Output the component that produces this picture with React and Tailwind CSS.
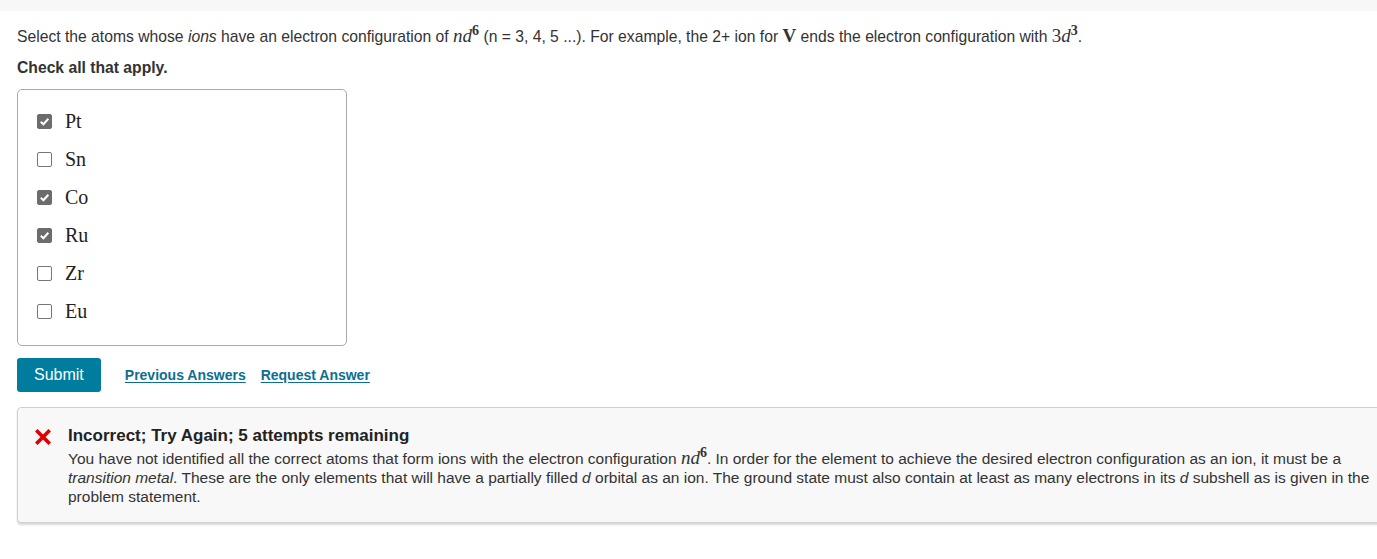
import { useState } from 'react';

const atoms = [
  { sym: 'Pt', checked: true },
  { sym: 'Sn', checked: false },
  { sym: 'Co', checked: true },
  { sym: 'Ru', checked: true },
  { sym: 'Zr', checked: false },
  { sym: 'Eu', checked: false },
];

const Math = ({ children }) => (
  <span className="font-['Liberation_Serif',serif] text-[19px]">{children}</span>
);

const Nd6 = () => (
  <Math>
    <i>nd</i>
    <sup className="text-[14px] font-semibold">6</sup>
  </Math>
);

const Box = ({ checked, onClick }) => (
  <button
    onClick={onClick}
    className={`w-[15px] h-[15px] rounded-[2px] flex items-center justify-center ${
      checked ? 'bg-[#6c6c6c] border border-[#6c6c6c]' : 'bg-white border border-[#767676]'
    }`}
  >
    {checked && (
      <svg width="11" height="11" viewBox="0 0 10 10">
        <path d="M1.6 5.2 L4 7.5 L8.5 2.5" fill="none" stroke="white" strokeWidth="1.8" />
      </svg>
    )}
  </button>
);

export default function App() {
  const [items, setItems] = useState(atoms);

  const toggle = (i) =>
    setItems(items.map((a, j) => (j === i ? { ...a, checked: !a.checked } : a)));

  return (
    <div className="w-[1377px] h-[559px] overflow-hidden bg-white text-[#333] font-['Liberation_Sans',Arial,sans-serif]">
      <div className="h-[11px] bg-[#f7f7f7]" />

      <div className="pl-[17px] pt-[15px]">
        <p className="text-[15.7px] leading-[20px]">
          Select the atoms whose <i>ions</i> have an electron configuration of <Nd6 /> (n = 3, 4, 5 ...). For
          example, the 2+ ion for <Math><b>V</b></Math> ends the electron configuration with{' '}
          <Math>
            3<i>d</i>
            <sup className="text-[14px] font-semibold">3</sup>
          </Math>
          .
        </p>
        <p className="mt-[11px] text-[15.7px] font-bold leading-[20px]">Check all that apply.</p>

        <div className="mt-[11px] w-[330px] h-[257px] border border-[#aaa] rounded-[5px] pt-[12px] pl-[19px]">
          {items.map((a, i) => (
            <div key={a.sym} className="h-[38px] flex items-center gap-[13px]">
              <Box checked={a.checked} onClick={() => toggle(i)} />
              <span className="font-['Liberation_Serif',serif] text-[20px] text-[#222]">{a.sym}</span>
            </div>
          ))}
        </div>

        <div className="mt-[12px] flex items-center">
          <button className="h-[34px] px-[17px] bg-[#007c9e] text-white text-[16px] rounded-[3px]">
            Submit
          </button>
          <a href="#" className="ml-[24px] text-[14px] font-bold text-[#0c6f92] underline underline-offset-2">
            Previous Answers
          </a>
          <a href="#" className="ml-[15px] text-[14px] font-bold text-[#0c6f92] underline underline-offset-2">
            Request Answer
          </a>
        </div>

        <div className="mt-[15px] w-[1400px] bg-[#f8f8f8] border border-[#d0d0d0] rounded-[4px] shadow-[0_2px_2px_rgba(0,0,0,0.15)] pt-[18px] pb-[16px] pl-[17px] flex gap-[17px]">
          <svg width="16" height="16" viewBox="0 0 16 16" className="mt-[3px] shrink-0">
            <path d="M2.5 2.5 L13.5 13.5 M13.5 2.5 L2.5 13.5" stroke="#e00000" strokeWidth="3.6" strokeLinecap="square" />
          </svg>
          <div className="w-[1330px]">
            <p className="text-[17px] font-bold leading-[20px] text-[#222]">
              Incorrect; Try Again; 5 attempts remaining
            </p>
            <p className="text-[15.5px] leading-[19px] mt-[2px]">
              You have not identified all the correct atoms that form ions with the electron configuration <Nd6 />. In
              order for the element to achieve the desired electron configuration as an ion, it must be a{' '}
              <i>transition metal</i>. These are the only elements that will have a partially filled <i>d</i> orbital
              as an ion. The ground state must also contain at least as many electrons in its <i>d</i> subshell as is
              given in the problem statement.
            </p>
          </div>
        </div>
      </div>
    </div>
  );
}
